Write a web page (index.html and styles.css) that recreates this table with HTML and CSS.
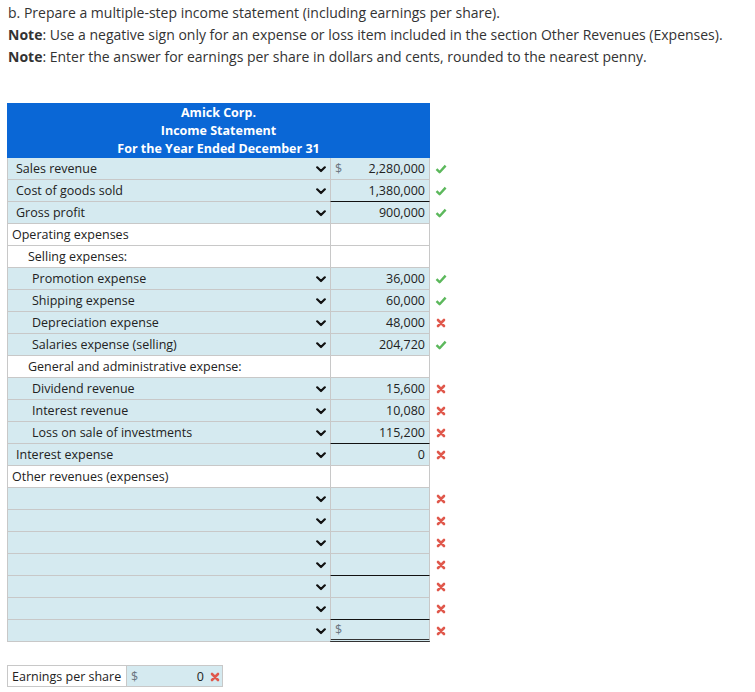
FILE: index.html
```html
<!DOCTYPE html>
<html>
<head>
<meta charset="utf-8">
<link rel="stylesheet" href="styles.css">
</head>
<body>
<div class="intro">
  <p>b. Prepare a multiple-step income statement (including earnings per share).</p>
  <p><b>Note</b>: Use a negative sign only for an expense or loss item included in the section Other Revenues (Expenses).</p>
  <p><b>Note</b>: Enter the answer for earnings per share in dollars and cents, rounded to the nearest penny.</p>
</div>

<svg width="0" height="0" class="defs">
  <defs>
    <symbol id="chev" viewBox="0 0 10 7"><path d="M1.2 1.3 L5 5 L8.8 1.3" fill="none" stroke="#111" stroke-width="2.2" stroke-linecap="round" stroke-linejoin="round"/></symbol>
    <symbol id="ok" viewBox="0 0 12 10"><path d="M1.5 5.2 L4.6 8.2 L10.6 1.6" fill="none" stroke="#5cb85c" stroke-width="2.4" stroke-linejoin="round"/></symbol>
    <symbol id="no" viewBox="0 0 10 10"><path d="M2 2 L8 8 M8 2 L2 8" fill="none" stroke="#e0584c" stroke-width="2.6" stroke-linecap="round"/></symbol>
  </defs>
</svg>

<div class="statement">
  <div class="head">
    <div>Amick Corp.</div>
    <div>Income Statement</div>
    <div>For the Year Ended December 31</div>
  </div>

  <div class="row"><div class="lab sel">Sales revenue<svg class="chev"><use href="#chev"/></svg></div><div class="val"><span class="cur">$</span>2,280,000</div><svg class="mark"><use href="#ok"/></svg></div>
  <div class="row"><div class="lab sel">Cost of goods sold<svg class="chev"><use href="#chev"/></svg></div><div class="val ul">1,380,000</div><svg class="mark"><use href="#ok"/></svg></div>
  <div class="row"><div class="lab sel">Gross profit<svg class="chev"><use href="#chev"/></svg></div><div class="val">900,000</div><svg class="mark"><use href="#ok"/></svg></div>
  <div class="row"><div class="lab plain">Operating expenses</div><div class="val plain"></div></div>
  <div class="row"><div class="lab plain ind">Selling expenses:</div><div class="val plain"></div></div>
  <div class="row"><div class="lab sel ind">Promotion expense<svg class="chev"><use href="#chev"/></svg></div><div class="val">36,000</div><svg class="mark"><use href="#ok"/></svg></div>
  <div class="row"><div class="lab sel ind">Shipping expense<svg class="chev"><use href="#chev"/></svg></div><div class="val">60,000</div><svg class="mark"><use href="#ok"/></svg></div>
  <div class="row"><div class="lab sel ind">Depreciation expense<svg class="chev"><use href="#chev"/></svg></div><div class="val">48,000</div><svg class="mark"><use href="#no"/></svg></div>
  <div class="row"><div class="lab sel ind">Salaries expense (selling)<svg class="chev"><use href="#chev"/></svg></div><div class="val">204,720</div><svg class="mark"><use href="#ok"/></svg></div>
  <div class="row"><div class="lab plain ind">General and administrative expense:</div><div class="val plain"></div></div>
  <div class="row"><div class="lab sel ind">Dividend revenue<svg class="chev"><use href="#chev"/></svg></div><div class="val">15,600</div><svg class="mark"><use href="#no"/></svg></div>
  <div class="row"><div class="lab sel ind">Interest revenue<svg class="chev"><use href="#chev"/></svg></div><div class="val">10,080</div><svg class="mark"><use href="#no"/></svg></div>
  <div class="row"><div class="lab sel ind">Loss on sale of investments<svg class="chev"><use href="#chev"/></svg></div><div class="val ul">115,200</div><svg class="mark"><use href="#no"/></svg></div>
  <div class="row"><div class="lab sel">Interest expense<svg class="chev"><use href="#chev"/></svg></div><div class="val">0</div><svg class="mark"><use href="#no"/></svg></div>
  <div class="row"><div class="lab plain">Other revenues (expenses)</div><div class="val plain"></div></div>
  <div class="row"><div class="lab sel"><svg class="chev"><use href="#chev"/></svg></div><div class="val"></div><svg class="mark"><use href="#no"/></svg></div>
  <div class="row"><div class="lab sel"><svg class="chev"><use href="#chev"/></svg></div><div class="val"></div><svg class="mark"><use href="#no"/></svg></div>
  <div class="row"><div class="lab sel"><svg class="chev"><use href="#chev"/></svg></div><div class="val"></div><svg class="mark"><use href="#no"/></svg></div>
  <div class="row"><div class="lab sel"><svg class="chev"><use href="#chev"/></svg></div><div class="val ul"></div><svg class="mark"><use href="#no"/></svg></div>
  <div class="row"><div class="lab sel"><svg class="chev"><use href="#chev"/></svg></div><div class="val"></div><svg class="mark"><use href="#no"/></svg></div>
  <div class="row"><div class="lab sel"><svg class="chev"><use href="#chev"/></svg></div><div class="val ul"></div><svg class="mark"><use href="#no"/></svg></div>
  <div class="row"><div class="lab sel"><svg class="chev"><use href="#chev"/></svg></div><div class="val dbl"><span class="cur">$</span></div><svg class="mark"><use href="#no"/></svg></div>
</div>

<div class="eps">
  <div class="eps-lab">Earnings per share</div>
  <div class="eps-val"><span class="cur">$</span><span class="num">0</span><svg class="mark"><use href="#no"/></svg></div>
</div>
</body>
</html>
```

FILE: styles.css
```css
html, body {
  margin: 0;
  padding: 0;
  background: #fff;
}
body {
  font-family: "Open Sans", "Liberation Sans", sans-serif;
  color: #333;
  padding: 2px 0 0 8px;
}
.defs {
  position: absolute;
  width: 0;
  height: 0;
}
.intro p {
  margin: 0;
  font-size: 14px;
  line-height: 22px;
}
.intro b {
  font-weight: 700;
}
.statement {
  margin-top: 35px;
  margin-left: -1px;
  width: 460px;
  font-size: 12.5px;
  color: #222;
}
.head {
  box-sizing: border-box;
  width: 423px;
  height: 55px;
  padding-top: 1px;
  background: #0a67d6;
  color: #fff;
  font-weight: 700;
  text-align: center;
  line-height: 18px;
}
.row {
  display: grid;
  grid-template-columns: 323px 100px 37px;
  height: 22px;
}
.lab, .val {
  box-sizing: border-box;
  height: 22px;
  border-bottom: 1px solid #c8c8c8;
  border-left: 1px solid #c8c8c8;
  background: #d5eaf0;
  display: flex;
  align-items: center;
  padding-top: 1px;
  line-height: 20px;
}
.lab {
  padding-left: 8px;
}
.lab.plain {
  background: #fff;
  padding-left: 4px;
}
.lab.sel.ind {
  padding-left: 24px;
}
.lab.plain.ind {
  padding-left: 20px;
}
.chev {
  width: 10px;
  height: 7px;
  margin-left: auto;
  margin-right: 4px;
}
.val {
  border-right: 1px solid #c8c8c8;
  justify-content: flex-end;
  padding-right: 4px;
  position: relative;
}
.val.plain {
  background: #fff;
}
.val.ul {
  border-bottom-color: #111;
}
.val.dbl {
  border-bottom: 3px double #333;
}
.cur {
  color: #6a7480;
  margin-right: auto;
  padding-left: 4px;
}
.mark {
  width: 12px;
  height: 10px;
  align-self: center;
  margin-left: 5px;
}
.eps {
  margin-top: 23px;
  margin-left: -1px;
  display: flex;
  font-size: 12.5px;
  color: #222;
  height: 22px;
}
.eps-lab, .eps-val {
  box-sizing: border-box;
  border: 1px solid #c8c8c8;
  display: flex;
  align-items: center;
  padding-top: 1px;
  height: 22px;
}
.eps-lab {
  width: 120px;
  padding-left: 4px;
  background: #fff;
}
.eps-val {
  width: 96px;
  border-left: none;
  background: #d5eaf0;
}
.eps-val .num {
  margin-left: auto;
}
.eps-val .mark {
  margin-left: 6px;
  margin-right: 2px;
  width: 10px;
}
```
